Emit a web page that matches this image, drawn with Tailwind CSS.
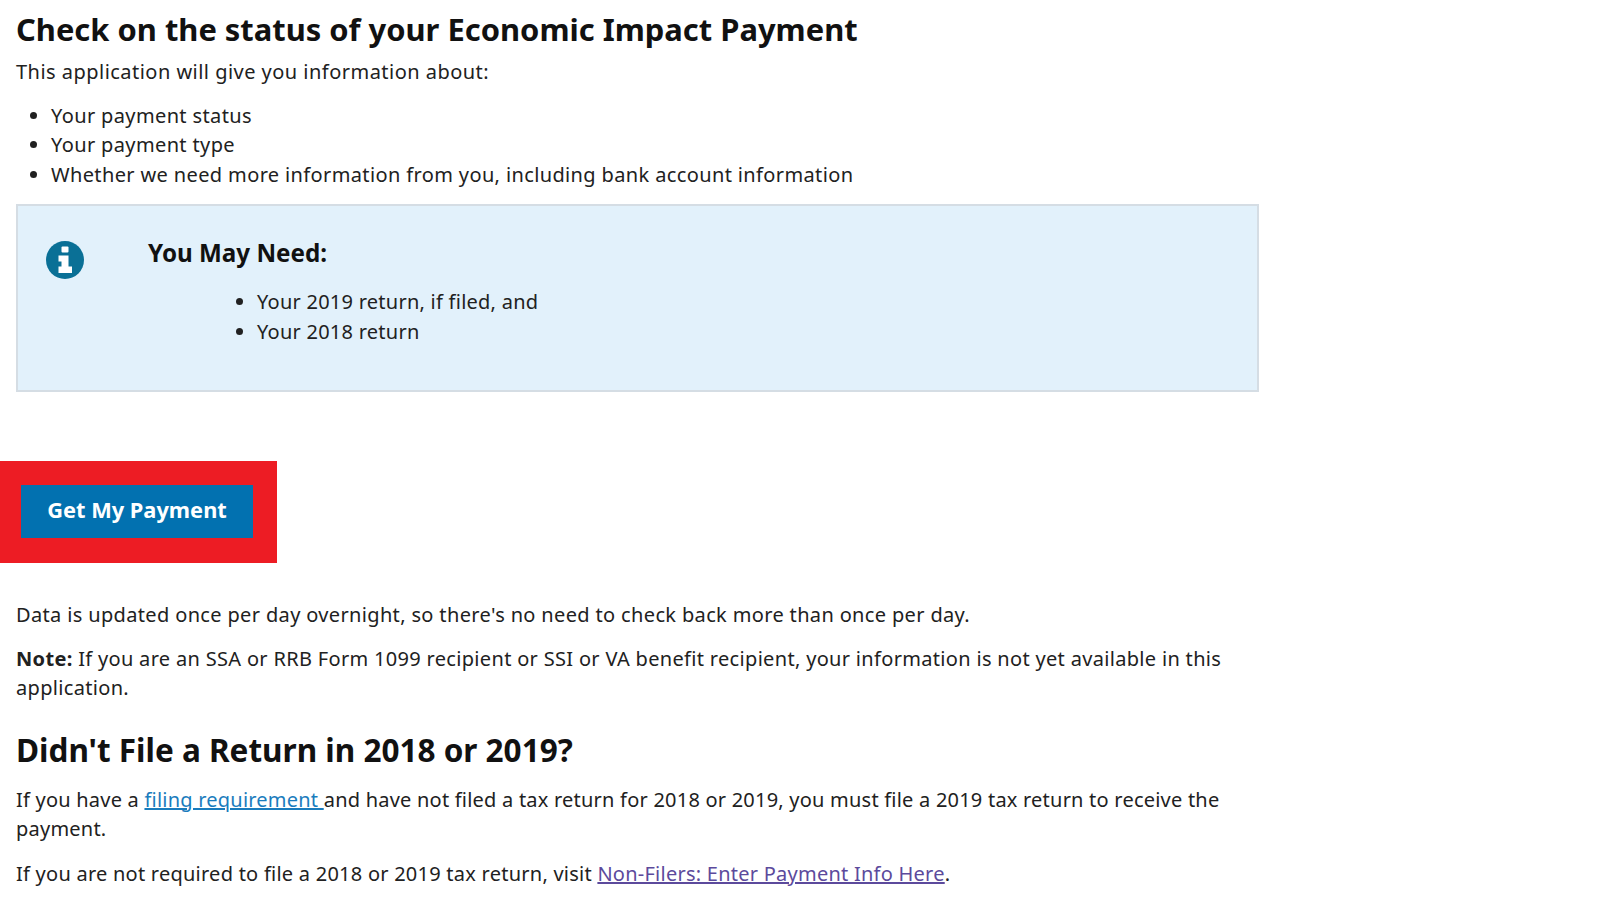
<!DOCTYPE html>
<html><head><script src="https://cdn.jsdelivr.net/npm/@tailwindcss/browser@4"></script></head>
<body class="bg-white">
<div class="w-[1598px] h-[900px] overflow-hidden font-['Noto_Sans','Open_Sans',sans-serif] text-[#212121] text-[20px] leading-[29.5px] tracking-[0.37px]">
<div class="pl-[16px] w-[1259px]">
<h1 class="font-bold text-[30.9px] leading-[40px] pt-[9px] text-[#111] tracking-normal">Check on the status of your Economic Impact Payment</h1>
<p class="mt-[8px] tracking-[0.47px]">This application will give you information about:</p>
<ul class="list-disc pl-[35px] mt-[14px]">
<li>Your payment status</li>
<li>Your payment type</li>
<li>Whether we need more information from you, including bank account information</li>
</ul>
<div class="mt-[15px] h-[188px] bg-[#e2f1fb] border-2 border-[#d5dde4] flex">
<svg class="ml-[28px] mt-[35px] w-[38px] h-[38px]" viewBox="0 0 38 38"><circle cx="19" cy="19" r="19" fill="#0a7096"/><rect x="15.500" y="5.500" width="7" height="6" rx="1" fill="#fff"/><path d="M12.500 14.500h10v11h3.500v6.500H12.500v-6.500h3v-5h-3z" fill="#fff"/></svg>
<div class="ml-[64px]">
<div class="font-bold text-[24.2px] leading-[32px] mt-[31px] text-[#111] tracking-normal">You May Need:</div>
<ul class="list-disc pl-[109px] mt-[18px] tracking-[0.25px]">
<li>Your 2019 return, if filed, and</li>
<li>Your 2018 return</li>
</ul>
</div>
</div>
</div>
<div class="mt-[69px] w-[277px] h-[102px] bg-[#ed1c24] flex pl-[21px] pt-[24px]">
<div class="w-[232px] h-[53px] bg-[#0271b0] text-white font-bold text-[21.8px] tracking-normal flex items-center justify-center pb-[4px]">Get My Payment</div>
</div>
<div class="pl-[16px] w-[1259px]">
<p class="mt-[37px] tracking-[0.35px]">Data is updated once per day overnight, so there's no need to check back more than once per day.</p>
<p class="mt-[14px] tracking-[0.32px]"><b>Note:</b> If you are an SSA or RRB Form 1099 recipient or SSI or VA benefit recipient, your information is not yet available in this application.</p>
<h2 class="font-bold text-[31.5px] leading-[40px] mt-[27px] text-[#111] tracking-normal">Didn't File a Return in 2018 or 2019?</h2>
<p class="mt-[15px] tracking-[0.22px]">If you have a <a class="underline text-[#1a7cbd]">filing requirement </a>and have not filed a tax return for 2018 or 2019, you must file a 2019 tax return to receive the payment.</p>
<p class="mt-[15px] tracking-[0.245px]">If you are not required to file a 2018 or 2019 tax return, visit <a class="underline text-[#5c4a9c]">Non-Filers: Enter Payment Info Here</a>.</p>
</div>
</div>
</body></html>
